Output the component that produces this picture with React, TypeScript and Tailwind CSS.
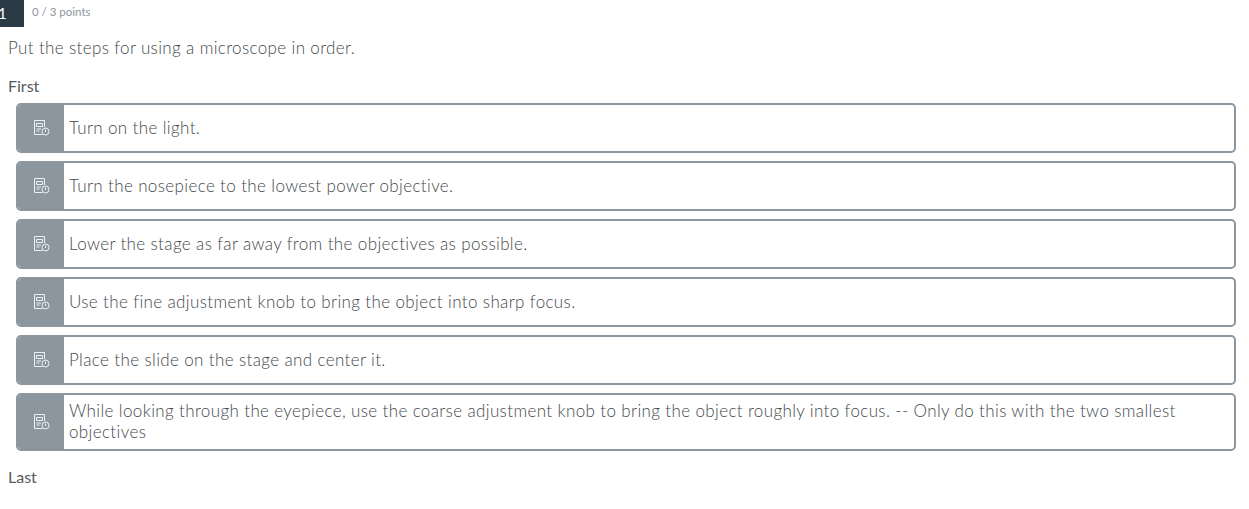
const steps = [
  "Turn on the light.",
  "Turn the nosepiece to the lowest power objective.",
  "Lower the stage as far away from the objectives as possible.",
  "Use the fine adjustment knob to bring the object into sharp focus.",
  "Place the slide on the stage and center it.",
  "While looking through the eyepiece, use the coarse adjustment knob to bring the object roughly into focus. -- Only do this with the two smallest objectives",
];

function DocClockIcon() {
  return (
    <svg width="17" height="16" viewBox="0 0 17 16" fill="none" stroke="#eef0f1" strokeWidth="1">
      <path d="M9.5 14.5H1.5V0.5H11.5V7" />
      <path d="M3.5 3.5H9.5V6.5H3.5Z" />
      <path d="M3.5 9H8M3.5 11H6.5" />
      <circle cx="12.5" cy="11.5" r="3.5" />
      <path d="M12.5 9.5V12" />
    </svg>
  );
}

export default function App() {
  return (
    <div className="w-[1249px] h-[509px] overflow-hidden bg-white font-['Lato',sans-serif] text-[#565a5c]">
      <div className="flex h-[27px] items-center">
        <div className="flex h-[27px] w-6 items-center overflow-hidden bg-[#2b3b46] text-[15px] text-white">
          <span className="-ml-[2px]">1</span>
        </div>
        <span className="ml-2 -mt-[3px] text-[11.5px] text-[#8f959b]">0 / 3 points</span>
      </div>
      <p className="ml-2 mt-[10px] text-[17px] leading-[22px] tracking-[0.36px] font-light text-[#45494c]">
        Put the steps for using a microscope in order.
      </p>
      <p className="ml-2 mt-[17px] text-base leading-5">First</p>
      <div className="ml-4 mt-[7px] flex w-[1220px] flex-col gap-2">
        {steps.map((s) => (
          <div
            key={s}
            className="flex min-h-[50px] overflow-hidden rounded-[5px] border-2 border-[#8b969e] bg-white"
          >
            <div className="flex w-[46px] shrink-0 items-center justify-center bg-[#8b969e]">
              <DocClockIcon />
            </div>
            <div className="flex flex-1 items-center pl-[5px] pr-4 pt-[5px] pb-[7px] text-[17px] leading-[21px] tracking-[0.37px] font-light text-[#45494c]">
              <span>{s}</span>
            </div>
          </div>
        ))}
      </div>
      <p className="ml-2 mt-4 text-base leading-5">Last</p>
    </div>
  );
}
